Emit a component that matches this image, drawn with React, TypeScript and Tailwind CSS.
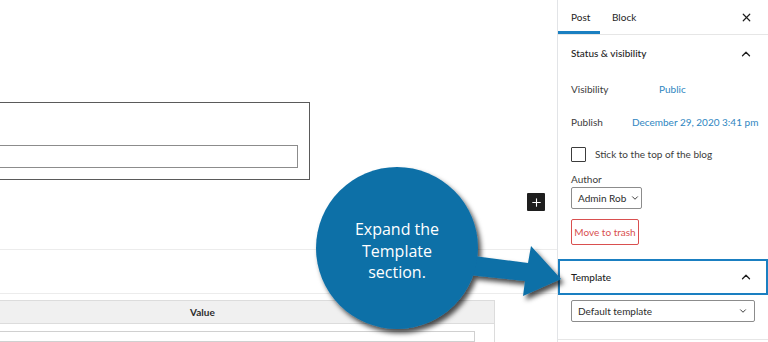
import { ChevronDown, ChevronUp, X, Plus } from "lucide-react";

function Callout() {
  return (
    <>
      <svg
        className="absolute left-0 top-0 pointer-events-none"
        width={768}
        height={342}
        viewBox="0 0 768 342"
      >
        <defs>
          <filter id="shadow" x="-20%" y="-20%" width="140%" height="140%">
            <feDropShadow dx="3" dy="4" stdDeviation="2.5" floodColor="#000" floodOpacity="0.7" />
          </filter>
        </defs>
        <g filter="url(#shadow)" fill="#0c6fa7">
          <polygon points="443,252 528,263 531,246 561,279 523,296 525,281 440,272" />
          <circle cx="397" cy="248" r="81" />
        </g>
      </svg>
      <div className="absolute left-[317px] top-[219px] w-[160px] text-center text-white text-[16px] leading-[21.5px] font-['Open_Sans',sans-serif]">
        Expand the
        <br />
        Template
        <br />
        section.
      </div>
    </>
  );
}

export default function App() {
  return (
    <div className="relative w-[768px] h-[342px] overflow-hidden bg-white flex font-['Lato',sans-serif] text-[10px] text-[#3c3c3c] whitespace-nowrap">
      {/* editor canvas */}
      <div className="w-[557px] flex flex-col">
        <div className="h-[102px]" />
        <div className="w-[310px] h-[78px] border-y border-r border-[#5a5a5a] pt-[42px] pr-[11px]">
          <div className="h-[23px] border border-l-0 border-[#8c8c8c]" />
        </div>
        <div className="flex justify-end pr-[12px] mt-[13px]">
          <div className="w-[18px] h-[18px] bg-[#1e1e1e] rounded-[1px] flex items-center justify-center text-white">
            <Plus size={13} strokeWidth={2} />
          </div>
        </div>
        <div className="mt-[38px] h-[45px] border-t border-b border-[#ececec]" />
        <div className="mt-[6px] w-[495px] flex-1 border-t border-r border-[#dcdcdc] flex flex-col">
          <div className="h-[23px] bg-[#f0f0f0] border-b border-[#dcdcdc] flex items-center pl-[190px] font-bold text-[10px] text-[#2c2c2c]">
            Value
          </div>
          <div className="mt-[7px] w-[475px] flex-1 border border-l-0 border-[#d0d0d0]" />
        </div>
      </div>

      {/* settings sidebar */}
      <div className="w-[211px] border-l border-[#e2e4e7] flex flex-col">
        <div className="h-[35px] flex items-stretch border-b border-[#e6e6e6]">
          <div className="w-[42px] pl-[13px] flex items-center border-b-[3px] border-[#1a7fc1] pt-[3px] text-[#1e1e1e]">
            Post
          </div>
          <div className="pl-[12px] flex items-center text-[#1e1e1e]">Block</div>
          <div className="ml-auto pr-[15px] flex items-center text-[#1e1e1e]">
            <X size={13} strokeWidth={2.2} />
          </div>
        </div>

        <div className="h-[37px] flex items-center pl-[13px] pr-[15px] text-[#1e1e1e] font-medium">
          Status &amp; visibility
          <ChevronUp size={14} strokeWidth={2.2} className="ml-auto" />
        </div>

        <div className="pl-[13px]">
          <div className="h-[18px] mt-[8px] flex items-center">
            <span className="w-[88px]">Visibility</span>
            <span className="text-[#2e86c1]">Public</span>
          </div>
          <div className="h-[18px] mt-[15px] flex items-center">
            <span className="w-[61px]">Publish</span>
            <span className="text-[#2e86c1]">December 29, 2020 3:41 pm</span>
          </div>
          <div className="mt-[16px] flex items-center">
            <div className="w-[15px] h-[15px] border border-[#3c3c3c] rounded-[1px]" />
            <span className="ml-[9px]">Stick to the top of the blog</span>
          </div>
          <div className="mt-[10px] leading-[14px]">Author</div>
          <div className="mt-[1px] w-[71px] h-[22px] border border-[#8c8c8c] rounded-[2px] flex items-center pl-[6px] text-[#2c2c2c]">
            Admin Rob
            <ChevronDown size={10} strokeWidth={2.2} className="ml-[4px]" />
          </div>
          <div className="mt-[10px] w-[68px] h-[26px] border border-[#d94f4f] rounded-[2px] flex items-center justify-center text-[#d94f4f]">
            Move to trash
          </div>
        </div>

        <div className="mt-[14px] h-[36px] border-2 border-[#1a7fc1] flex items-center pl-[11px] pr-[13px] text-[#1e1e1e] font-medium">
          Template
          <ChevronUp size={14} strokeWidth={2.2} className="ml-auto" />
        </div>
        <div className="pl-[13px] pr-[13px] mt-[5px] pb-[17px] border-b border-[#e6e6e6]">
          <div className="h-[22px] border border-[#8c8c8c] rounded-[2px] flex items-center pl-[6px] pr-[6px] text-[#2c2c2c]">
            Default template
            <ChevronDown size={10} strokeWidth={2.2} className="ml-auto" />
          </div>
        </div>
      </div>

      <Callout />
    </div>
  );
}
